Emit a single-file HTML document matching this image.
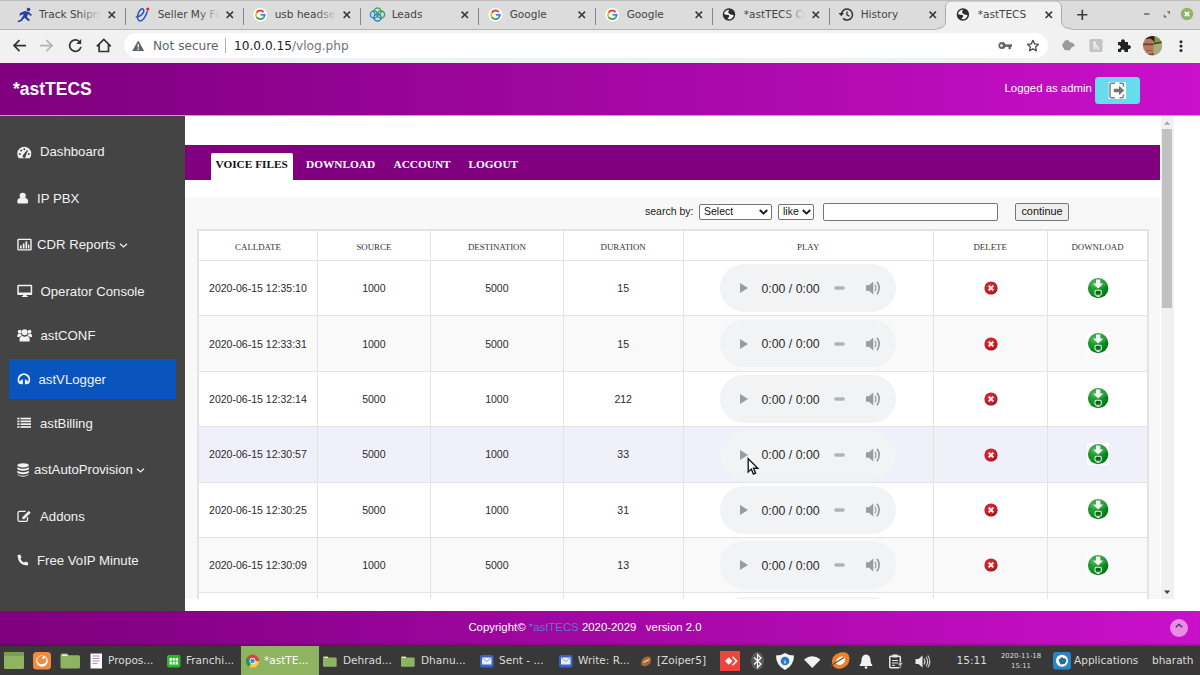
<!DOCTYPE html>
<html><head><meta charset="utf-8"><title>*astTECS</title>
<style>
*{box-sizing:border-box;margin:0;padding:0}
html,body{width:1200px;height:675px;overflow:hidden;background:#fff}
body{position:relative;font-family:"Liberation Sans",sans-serif}
.abs{position:absolute}
/* chrome */
#tabbar{position:absolute;left:0;top:0;width:1200px;height:30px;background:#dcdcdc;box-shadow:inset 0 -1px 0 #b4b4b4, inset 0 1px 0 #bcbcbc;overflow:hidden}
#tabbar .t{position:absolute;top:0;height:30px;overflow:hidden;font:10.540px "DejaVu Sans",sans-serif;color:#454545;line-height:29.400px;white-space:nowrap}
#tabbar .t.f::after{content:'';position:absolute;right:0;top:2px;width:22px;height:26px;background:linear-gradient(90deg,rgba(220,220,220,0),#dcdcdc)}
#tabbar .sep{position:absolute;top:7.500px;width:1px;height:17px;background:#80868b}
#tabbar .x{position:absolute;top:0;font:bold 12px "DejaVu Sans",sans-serif;line-height:29px;color:#3c4043}
#toolbar{position:absolute;left:0;top:30px;width:1200px;height:33px;background:#f1f1f1}
#omni{position:absolute;left:124px;top:3.200px;width:923.500px;height:25px;border-radius:12.500px;background:#fff}
#omni span{position:absolute;top:1.200px;line-height:25px;font:12.150px/25px "DejaVu Sans",sans-serif;white-space:nowrap}
/* header */
#hdr{position:absolute;left:0;top:63px;width:1200px;height:53px;background:linear-gradient(90deg,#800080 0%,#840084 10%,#ca10ca 100%);border-bottom:1px solid #d9a36a}
#side{position:absolute;left:0;top:116px;width:185px;height:496px;background:#444}
#side .it{position:absolute;color:#f2f2f2;font-size:13.2px;white-space:nowrap;line-height:16px}
#main{position:absolute;left:185px;top:116px;width:975px;height:483px;background:#fff;overflow:hidden}
#foot{position:absolute;left:0;top:611px;width:1200px;height:35px;box-shadow:inset 0 -3px 3px -2px rgba(60,0,60,.45);background:linear-gradient(90deg,#800080 0%,#840084 10%,#ca10ca 100%)}
#task{position:absolute;left:0;top:646px;width:1200px;height:29px;background:#383838;color:#dcdcdc;font:10.540px "DejaVu Sans",sans-serif;overflow:hidden}
#task .l{position:absolute;top:0;line-height:29px;white-space:nowrap}
table{border-collapse:collapse}

.nv{position:absolute;top:41px;font:bold 11.300px/14px "Liberation Serif",serif;color:#fff;white-space:nowrap}
.sel{position:absolute;top:88.200px;height:15.400px;border:1px solid #767676;border-radius:2px;background:#fff;font:10.500px/13.600px "Liberation Sans",sans-serif;color:#111;padding-left:4px}
.sel svg{position:absolute;top:4.200px}
.tb{position:absolute;table-layout:fixed;width:950px;background:#fff;border:2px solid #e3e3e3}
.tb th,.tb td{border:1px solid #e3e3e3;text-align:center;vertical-align:middle;padding:0}
.tb th{height:30.500px;font:normal 8.850px "Liberation Serif",serif;color:#333;padding-top:3px}
.tb td{height:55.400px;font:10.540px "Liberation Sans",sans-serif;color:#2b2b2b}
.tb tr.ev td{background:#f9f9f9}.tb tr.hv td{background:#f0f0fb}
.au{position:relative;width:176px;height:47.500px;border-radius:24px;background:#f1f3f4;margin:0 auto;left:.3px}
.au svg{position:absolute;left:0;top:0}
.au span{position:absolute;left:41px;top:16.600px;font:12.300px/16px "Liberation Sans",sans-serif;color:#2a2a2a;white-space:nowrap}
.tb td svg.ic{display:block;margin:0 auto}
</style></head><body>
<!-- TABBAR -->
<div id="tabbar">
 <!-- active tab shape -->
 <svg class="abs" style="left:937px;top:0" width="134" height="30" viewBox="0 0 134 30"><path d="M0 29 C5 29 8 26 8 21 V7.500 C8 3.500 11 .6 15 .6 H118 C122 .6 125 3.500 125 7.500 V21 C125 26 128 29 134 29 V30 H0 Z" fill="#f1f1f1"/><path d="M0 28.500 C5 28.500 8.500 26 8.500 21 V7.500 C8.500 3.500 11 1 15 1 H118 C122 1 124.500 3.500 124.500 7.500 V21 C124.500 26 128 28.500 134 28.500" fill="none" stroke="#a9a9a9" stroke-width="1"/></svg>
 <div class="t f" style="left:39px;width:62px">Track Shipment</div>
 <div class="t f" style="left:157.7px;width:62px">Seller My Forms</div>
 <div class="t f" style="left:274.7px;width:62px">usb headset</div>
 <div class="t" style="left:391.7px">Leads</div>
 <div class="t" style="left:509.7px">Google</div>
 <div class="t" style="left:626.7px">Google</div>
 <div class="t f" style="left:743.7px;width:62px">*astTECS Co</div>
 <div class="t" style="left:860.7px">History</div>
 <div class="t" style="left:977.7px">*astTECS</div>
 <div class="sep" style="left:125px"></div><div class="sep" style="left:243px"></div><div class="sep" style="left:360px"></div><div class="sep" style="left:478px"></div><div class="sep" style="left:595px"></div><div class="sep" style="left:712px"></div><div class="sep" style="left:829px"></div>
 <svg class="abs" style="left:0;top:.2px" width="1200" height="30" viewBox="0 0 1200 30">
  <g stroke="#3a3a3a" stroke-width="1.6" stroke-linecap="butt" fill="none">
   <path d="M108.6 11.6 l6.4 6.4 m0 -6.4 l-6.4 6.4"/><path d="M226.6 11.6 l6.4 6.4 m0 -6.4 l-6.4 6.4"/><path d="M343.6 11.6 l6.4 6.4 m0 -6.4 l-6.4 6.4"/><path d="M461.6 11.6 l6.4 6.4 m0 -6.4 l-6.4 6.4"/><path d="M578.6 11.6 l6.4 6.4 m0 -6.4 l-6.4 6.4"/><path d="M695.6 11.6 l6.4 6.4 m0 -6.4 l-6.4 6.4"/><path d="M812.6 11.6 l6.4 6.4 m0 -6.4 l-6.4 6.4"/><path d="M929.6 11.6 l6.4 6.4 m0 -6.4 l-6.4 6.4"/><path d="M1045.6 11.6 l6.4 6.4 m0 -6.4 l-6.4 6.4"/>
   <path d="M1082.300 9.700 v10.200 m-5.100 -5.100 h10.200" stroke="#3a3a3a" stroke-width="1.650"/>
   <path d="M1144 14 h5.600" stroke="#6a6a6a" stroke-width="1.500"/>
   <path d="M1166.700 11.300 h3.300 v3.300z M1163.800 14.200 v3.300 h3.300z" fill="#6a6a6a" stroke="none"/>
  </g>
  <circle cx="1187" cy="14" r="6.200" fill="#8fb36b"/><path d="M1184.800 11.800 l4.400 4.400 m0 -4.400 l-4.400 4.400" stroke="#fff" stroke-width="1.700"/>
  <!-- favicons -->
  <!-- runner -->
  <g fill="#2b3f9e"><circle cx="28.500" cy="9.500" r="1.800"/><path d="M20 13 l5 -2 l4 1 l3 3 l-1.200 1 l-2.800 -2 l-1 3 l3 3 l-1.500 1.200 l-4 -3.500 l-3 3.500 l-3.500 1 l-.5 -1.300 l3 -1.200 l3.500 -5.500 l-3 .8 l-1.500 1.500 z"/></g>
  <!-- e -->
  <path d="M136.300 17 C140.500 16.500 144.800 12.800 143.600 9.800 C142.400 7.300 138.800 10 137.700 15 C136.800 19.800 139 22 141.800 20.300 C144.300 18.700 146 15.500 147.300 11.500" fill="none" stroke="#2a58b8" stroke-width="1.500" stroke-linecap="round"/><circle cx="147.800" cy="9" r="1.600" fill="#e0202a"/>
  <!-- google G -->
  <g id="gg" transform="translate(260.300 14.800)"><circle cx="0" cy="0" r="7" fill="#fff"/><g fill="none" stroke-width="1.900"><path d="M-3.720 -2.150 A4.300 4.300 0 0 1 3.290 -2.760" stroke="#ea4335"/><path d="M-3.720 2.150 A4.300 4.300 0 0 1 -3.720 -2.150" stroke="#fbbc05"/><path d="M3.290 2.760 A4.300 4.300 0 0 1 -3.720 2.150" stroke="#34a853"/><path d="M4.300 0 A4.300 4.300 0 0 1 3.290 2.760" stroke="#4285f4"/></g><rect x=".2" y="-.95" width="5" height="1.900" fill="#4285f4"/></g>
  <g transform="translate(235.200 0)"><use href="#gg"/></g><g transform="translate(352 0)"><use href="#gg"/></g>
  <!-- leads -->
  <g fill="none" stroke-width="1.500"><circle cx="377.500" cy="11.500" r="3.600" stroke="#4caf50"/><circle cx="377.500" cy="17.500" r="3.600" stroke="#1e7fd6"/><circle cx="374" cy="14.500" r="3.600" stroke="#2a8fd8"/><circle cx="381" cy="14.500" r="3.600" stroke="#3aa060"/></g>
  <!-- globe -->
  <g id="gl" transform="translate(729 14.500)"><circle cx="0" cy="0" r="6.200" fill="#2d2d2d"/><path d="M-4.900 -.4 Q-4.600 -3 -3 -3.700 Q-1.500 -4.800 .2 -4.700 Q-1 -3.300 -.7 -1.900 Q0 -.5 1.200 -.2 Q3 .6 4.600 .4 Q4.600 2.200 3.500 3 Q2.500 4.600 1 4.700 Q-.8 4.900 -1.700 4.100 Q-.7 3.600 0 2.500 Q.8 1.500 -.3 .6 Q-1.500 0 -3 .2 Z" fill="#f6f6f6"/></g>
  <g transform="translate(233.900 0)"><use href="#gl"/></g>
  <!-- history -->
  <g fill="none" stroke="#333" stroke-width="1.500"><path d="M841.500 14.500 a5.500 5.500 0 1 1 1.600 3.900"/><path d="M847 11.500 v3.300 l2.500 1.500" stroke-width="1.300"/></g><path d="M838.500 13 h5.500 l-2.750 3.200 z" fill="#333"/>
 </svg>
</div>
<div id="toolbar">
 <div id="omni"><span style="left:29px;color:#5f6368">Not secure</span><span style="left:101px;top:5.300px;width:1px;height:14.500px;background:#b0b0b0"></span><span style="left:110px;color:#202124">10.0.0.15<span style="position:static;color:#70757a">/vlog.php</span></span></div>
 <svg class="abs" style="left:0;top:0" width="1200" height="33" viewBox="0 29.900 1200 33">
  <g fill="none" stroke="#333" stroke-width="1.700">
   <path d="M26 45.500 h-12 m5.500 -5.500 l-5.500 5.500 l5.500 5.500"/>
   <path d="M40 45.500 h12 m-5.500 -5.500 l5.500 5.500 l-5.500 5.500" stroke="#b4b4b4"/>
   <path d="M79.300 41.400 a5.700 5.700 0 1 0 1.600 5.400"/>
   <path d="M96.800 46.300 l7 -7 l7 7 m-11.700 -2.300 v7.400 h9.400 v-7.400" stroke-linejoin="miter"/>
  </g>
  <path d="M81.200 39 v5 h-5 z" fill="#333"/>
  <!-- warning -->
  <path d="M138.200 40.500 l6 10.500 h-12 z" fill="#5f6368"/><path d="M138.200 44 v3.500 m0 1 v1.400" stroke="#fff" stroke-width="1.300"/>
  <!-- key -->
  <g fill="#5f6368"><circle cx="1002" cy="45.500" r="3.500"/><rect x="1004" y="44.300" width="8" height="2.400"/><rect x="1008.500" y="45" width="2.300" height="4"/></g><circle cx="1001.500" cy="45.500" r="1.300" fill="#fff"/>
  <!-- star -->
  <path d="M1033 40.200 l1.650 3.600 l3.850 .45 l-2.900 2.600 l.8 3.850 l-3.400 -1.950 l-3.400 1.950 l.8 -3.850 l-2.900 -2.600 l3.850 -.45 z" fill="none" stroke="#444" stroke-width="1.250" stroke-linejoin="round"/>
  <!-- ext1 -->
  <path d="M1062 45 l3 -4.500 l3.500 -.5 l1 1.800 l3.500 1.200 l2 2.800 l-3 1.200 l-2.500 3.500 l-5 -.5 z" fill="#9a9a9a"/>
  <!-- ext2 -->
  <rect x="1089.500" y="39" width="13" height="13" rx="1.500" fill="#c4c4c4"/><path d="M1094.500 41.500 v8 m0 -3.500 q3 -2 3.500 3.500 M1093 43 h3" stroke="#f4f4f4" stroke-width="1.500" fill="none"/>
  <!-- puzzle -->
  <path d="M1118 42 h3.200 a2 2 0 1 1 3.600 0 h3.200 v3.200 a2 2 0 1 1 0 3.600 v3.200 h-3.600 a1.800 1.800 0 1 0 -3.200 0 h-3.200 v-3.400 a1.900 1.900 0 1 0 0 -3.400 z" fill="#222"/>
  <!-- avatar -->
  <clipPath id="avc"><circle cx="1152.500" cy="45.500" r="9.600"/></clipPath>
  <g clip-path="url(#avc)"><rect x="1142" y="35" width="22" height="22" fill="#b57c62"/><rect x="1153.600" y="35" width="10" height="22" fill="#aaab7c"/><path d="M1153.600 35 h10 v7 l-10 1.500z" fill="#7f9a4e"/><path d="M1153.600 43 l10 -2 v1.500 l-10 2z" fill="#4a3820"/><path d="M1142 35 h12.500 v8 q-1.500 -4 -5 -4.500 q-4 0 -7.500 3z" fill="#2a1c14"/><rect x="1143" y="43.300" width="10.500" height="1.800" fill="#3a2418" opacity=".6"/><path d="M1145 53 q4 2 8.600 0 v4 h-8.600z" fill="#5a3426" opacity=".8"/><rect x="1146.500" y="49.800" width="5" height="1" fill="#7a4838" opacity=".7"/></g>
  <!-- menu -->
  <g fill="#2e2e2e"><circle cx="1181" cy="41.600" r="1.550"/><circle cx="1181" cy="46" r="1.550"/><circle cx="1181" cy="50.400" r="1.550"/></g>
 </svg>
</div>
<div id="hdr">
 <div class="abs" style="left:13px;top:15px;font:bold 17.500px/22px 'Liberation Sans',sans-serif;color:#fff">*astTECS</div>
 <div class="abs" style="left:1004.500px;top:18.300px;font:11.400px/14px 'Liberation Sans',sans-serif;color:#fff;white-space:nowrap">Logged as admin</div>
 <div class="abs" style="left:1095px;top:13.700px;width:45px;height:27.600px;border-radius:3.500px;background:#67dced"></div>
 <svg class="abs" style="left:1107px;top:18px" width="22" height="20" viewBox="0 0 22 20"><rect x="1.700" y="1" width="17.300" height="17" fill="#fff"/><path d="M8 2.200 h-3.500 q-1.500 0 -1.500 1.500 v11.600 q0 1.500 1.500 1.500 h3.500 M12.500 2.200 h2.500 q1.500 0 1.500 1.500 v2 M12.500 16.800 h2.500 q1.500 0 1.500 -1.500 v-2" fill="none" stroke="#808080" stroke-width="1.500"/><path d="M6.800 7.700 h5.200 v-3 l5.300 4.800 l-5.300 4.800 v-3 h-5.200z" fill="#757575"/></svg>
</div>
<div id="side">
 <div class="act abs" style="left:9px;top:243.300px;width:166.500px;height:39.300px;background:#0a54be"></div>
 <div class="it" style="left:40px;top:28.4px">Dashboard</div>
 <div class="it" style="left:37px;top:74.9px">IP PBX</div>
 <div class="it" style="left:37px;top:121.4px">CDR Reports</div>
 <div class="it" style="left:40.500px;top:167.9px">Operator Console</div>
 <div class="it" style="left:40.500px;top:211.9px">astCONF</div>
 <div class="it" style="left:38.500px;top:255.9px">astVLogger</div>
 <div class="it" style="left:40px;top:299.9px">astBilling</div>
 <div class="it" style="left:34px;top:346.4px">astAutoProvision</div>
 <div class="it" style="left:40px;top:392.9px">Addons</div>
 <div class="it" style="left:37px;top:436.9px">Free VoIP Minute</div>
 <svg class="abs" style="left:0;top:0" width="185" height="494" viewBox="0 116 185 494">
  <g fill="#f2f2f2" stroke="none">
   <!-- dashboard gauge -->
   <path d="M18.700 157.900 a7 7 0 1 1 11.200 0 q-.3 .3 -.7 .3 h-9.800 q-.4 0 -.7 -.3z"/>
   <g fill="#444"><circle cx="19.800" cy="154" r="1"/><circle cx="21.200" cy="150.600" r="1"/><circle cx="24.300" cy="149.200" r="1"/><circle cx="28.800" cy="154" r="1"/><path d="M22.900 155.300 a1.600 1.600 0 1 0 2.800 .6 l2.300 -5.400 l-1 -.4 z"/></g>
   <!-- user -->
   <circle cx="22.700" cy="195.800" r="3.100"/><path d="M17.300 202.300 v-1 q0 -3 3.200 -3.300 q2.200 1.500 4.400 0 q3.200 .3 3.200 3.300 v1 q0 1.100 -1.100 1.100 h-8.600 q-1.100 0 -1.100 -1.100z"/>
   <!-- bar chart -->
   <path d="M18.600 238.800 h11.800 q1.300 0 1.300 1.300 v9.100 q0 1.300 -1.300 1.300 h-11.800 q-1.300 0 -1.300 -1.300 v-9.100 q0 -1.300 1.300 -1.300z M18.700 240.100 v9.100 h11.600 v-9.100z" fill-rule="evenodd"/>
   <rect x="20" y="245.500" width="1.700" height="3"/><rect x="22.800" y="243.500" width="1.700" height="5"/><rect x="25.500" y="241.300" width="1.700" height="7.200"/><rect x="28" y="244.500" width="1.300" height="4"/>
   <!-- monitor -->
   <path d="M18.300 284.700 h12.900 q1 0 1 1 v8.300 q0 1 -1 1 h-12.900 q-1 0 -1 -1 v-8.300 q0 -1 1 -1z M18.800 286.200 v6.300 h11.900 v-6.300z" fill-rule="evenodd"/><path d="M23.300 295 h3 l.4 1.100 h1 v.8 h-5.800 v-.8 h1z"/>
   <!-- users -->
   <circle cx="24.600" cy="332.200" r="3"/><path d="M19.600 341.500 v-2.700 q0 -2.700 2.700 -2.900 q2.300 1.500 4.600 0 q2.700 .2 2.700 2.900 v2.700z"/>
   <circle cx="19.700" cy="331.700" r="1.900"/><circle cx="29.500" cy="331.700" r="1.900"/><path d="M17.300 337 v-1.500 q0 -1.700 1.600 -1.700 h1.800 q.6 1.300 1.500 1.800 q-2.300 .2 -2.800 1.400z M32 337 v-1.500 q0 -1.700 -1.600 -1.700 h-1.800 q-.6 1.300 -1.500 1.800 q2.300 .2 2.800 1.400z"/>
   <!-- headphones -->
   <path d="M19.900 383.300 a5.400 5.400 0 1 1 8 0" fill="none" stroke="#f2f2f2" stroke-width="1.900"/><path d="M19.300 383.300 l1.300 -3 l2.300 -1 v4.900 h-1.800z M28.500 383.300 l-1.300 -3 l-2.300 -1 v4.900 h1.800z"/>
   <!-- list -->
   <g><rect x="17.300" y="417.700" width="2.200" height="1.700"/><rect x="20.500" y="417.700" width="10.500" height="1.700"/><rect x="17.300" y="420.500" width="2.200" height="1.700"/><rect x="20.500" y="420.500" width="10.500" height="1.700"/><rect x="17.300" y="423.300" width="2.200" height="1.700"/><rect x="20.500" y="423.300" width="10.500" height="1.700"/><rect x="17.300" y="426.100" width="2.200" height="1.700"/><rect x="20.500" y="426.100" width="10.500" height="1.700"/></g>
   <!-- database -->
   <ellipse cx="23.100" cy="465.300" rx="5.800" ry="2.100"/>
   <path d="M17.300 467.200 q5.800 3 11.600 0 v2 q-5.800 3.300 -11.600 0z M17.300 470.700 q5.800 3 11.600 0 v2 q-5.800 3.300 -11.600 0z M17.300 474.200 q5.800 3 11.600 0 v.6 q-5.800 3.800 -11.600 0z"/>
   <!-- phone -->
   <path d="M18 555 l2.300 -.5 l1.300 3 l-1.300 1.200 q1.200 2.700 3.800 4 l1.200 -1.300 l3 1.300 l-.5 2.300 q-.1 .5 -.7 .5 q-8.800 -.5 -9.600 -9.800 q0 -.5 .5 -.7z"/>
  </g>
  <!-- edit -->
  <g fill="none" stroke="#f2f2f2" stroke-width="1.300"><path d="M27.500 517 v2.800 q0 1.600 -1.600 1.600 h-6.300 q-1.600 0 -1.600 -1.600 v-6.800 q0 -1.600 1.600 -1.600 h6"/></g>
  <path d="M22 519.500 v-2.200 l6.800 -6.800 l2.200 2.200 l-6.800 6.800z" fill="#f2f2f2" stroke="#444" stroke-width=".7"/>
  <!-- chevrons -->
  <g fill="none" stroke="#f2f2f2" stroke-width="1.200"><path d="M120 243.700 l3.500 3.300 l3.500 -3.300"/><path d="M137 468.700 l3.500 3.300 l3.500 -3.300"/></g>
 </svg>
</div>
<!--MAIN-->
<div id="main">
<svg width="0" height="0" style="position:absolute"><defs><radialGradient id="rg" cx=".45" cy=".4" r=".6"><stop offset="0" stop-color="#e8303a"/><stop offset=".7" stop-color="#c81e28"/><stop offset="1" stop-color="#96141c"/></radialGradient><radialGradient id="gg2" cx=".35" cy=".35" r=".75"><stop offset="0" stop-color="#2fae3c"/><stop offset=".6" stop-color="#0f9022"/><stop offset="1" stop-color="#04681a"/></radialGradient></defs></svg>
<div class="abs" style="left:0;top:28.600px;width:975px;height:35.600px;background:#800080"></div>
<div class="abs" style="left:25.500px;top:36.500px;width:82px;height:28px;background:#fff;border-radius:2px 2px 0 0"></div>
<div class="nv" style="left:30.500px;color:#111">VOICE FILES</div><div class="nv" style="left:121px">DOWNLOAD</div><div class="nv" style="left:208.500px">ACCOUNT</div><div class="nv" style="left:283.500px">LOGOUT</div>
<div class="abs" style="left:0;top:81px;width:975px;height:403px;background:#f8f8f8"></div>
<div class="abs" style="left:460px;top:88.200px;font:10.500px/14px 'Liberation Sans',sans-serif;color:#222;white-space:nowrap">search by:</div>
<div class="sel" style="left:514px;width:73px">Select<svg width="9" height="6" viewBox="0 0 9 6" style="right:3.500px"><path d="M.8 1 l3.700 3.600 l3.700 -3.600" fill="none" stroke="#111" stroke-width="1.800"/></svg></div>
<div class="sel" style="left:593px;width:36.300px">like<svg width="9" height="6" viewBox="0 0 9 6" style="right:2.500px"><path d="M.8 1 l3.700 3.600 l3.700 -3.600" fill="none" stroke="#111" stroke-width="1.800"/></svg></div>
<div class="abs" style="left:638px;top:87px;width:175px;height:17.500px;border:1px solid #767676;border-radius:2px;background:#fff"></div>
<div class="abs" style="left:830px;top:87px;width:54px;height:17.500px;border:1px solid #767676;border-radius:2px;background:#efefef;font:10.900px/15px 'Liberation Sans',sans-serif;color:#111;text-align:center">continue</div>
<table class="tb" style="left:12.200px;top:113px"><colgroup><col style="width:119px"><col style="width:113.400px"><col style="width:132.600px"><col style="width:120px"><col style="width:250px"><col style="width:114px"><col style="width:101.200px"></colgroup>
<tr class="h"><th>CALLDATE</th><th>SOURCE</th><th>DESTINATION</th><th>DURATION</th><th>PLAY</th><th>DELETE</th><th>DOWNLOAD</th></tr>
<tr class="od"><td>2020-06-15 12:35:10</td><td>1000</td><td>5000</td><td>15</td><td><div class="au"><svg width="176" height="48" viewBox="0 0 176 48"><path d="M20 19 l8 5 l-8 5z" fill="#9b9b9b"/><path d="M116 24 h7" stroke="#b3b3b3" stroke-width="3.600" stroke-linecap="round"/><path d="M146 21.300 h3 l4.300 -3.800 v13 l-4.300 -3.800 h-3z" fill="#9b9b9b"/><path d="M155 20.800 q2 3.200 0 6.400" fill="none" stroke="#9b9b9b" stroke-width="1.200"/><path d="M157 17.800 q4.300 6.200 0 12.400" fill="none" stroke="#9b9b9b" stroke-width="1.700"/></svg><span>0:00 / 0:00</span></div></td><td><svg class="ic" width="16" height="16" viewBox="0 0 16 16" style="position:relative;left:.6px;top:.3px"><circle cx="8" cy="8" r="6.600" fill="url(#rg)"/><path d="M5.700 5.700 l4.600 4.600 m0 -4.600 l-4.600 4.600" stroke="#fff" stroke-width="1.900" stroke-linecap="butt"/></svg></td><td><svg class="ic" width="22.300" height="22.300" viewBox="0 0 22.300 22.300" style="background:#fff;position:relative;top:-.5px;left:.5px"><circle cx="11.150" cy="11.150" r="10.200" fill="url(#gg2)"/><path d="M1.500 8 a10.200 10.200 0 0 1 19.300 0 q-9.600 6 -19.300 0z" fill="#fff" opacity=".13"/><path d="M9 2.400 h4.300 v4 h3 l-5.150 5.200 l-5.150 -5.200 h3z" fill="#f4f4f4"/><rect x="8" y="13.200" width="6.300" height="5" rx="1.400" fill="#0a6a18" stroke="#e4f0e4" stroke-width="1.100"/><path d="M8.800 18.900 h4.700 l-2.350 1.300z" fill="#e4f0e4"/></svg></td></tr>
<tr class="ev"><td>2020-06-15 12:33:31</td><td>1000</td><td>5000</td><td>15</td><td><div class="au"><svg width="176" height="48" viewBox="0 0 176 48"><path d="M20 19 l8 5 l-8 5z" fill="#9b9b9b"/><path d="M116 24 h7" stroke="#b3b3b3" stroke-width="3.600" stroke-linecap="round"/><path d="M146 21.300 h3 l4.300 -3.800 v13 l-4.300 -3.800 h-3z" fill="#9b9b9b"/><path d="M155 20.800 q2 3.200 0 6.400" fill="none" stroke="#9b9b9b" stroke-width="1.200"/><path d="M157 17.800 q4.300 6.200 0 12.400" fill="none" stroke="#9b9b9b" stroke-width="1.700"/></svg><span>0:00 / 0:00</span></div></td><td><svg class="ic" width="16" height="16" viewBox="0 0 16 16" style="position:relative;left:.6px;top:.3px"><circle cx="8" cy="8" r="6.600" fill="url(#rg)"/><path d="M5.700 5.700 l4.600 4.600 m0 -4.600 l-4.600 4.600" stroke="#fff" stroke-width="1.900" stroke-linecap="butt"/></svg></td><td><svg class="ic" width="22.300" height="22.300" viewBox="0 0 22.300 22.300" style="background:#fff;position:relative;top:-.5px;left:.5px"><circle cx="11.150" cy="11.150" r="10.200" fill="url(#gg2)"/><path d="M1.500 8 a10.200 10.200 0 0 1 19.300 0 q-9.600 6 -19.300 0z" fill="#fff" opacity=".13"/><path d="M9 2.400 h4.300 v4 h3 l-5.150 5.200 l-5.150 -5.200 h3z" fill="#f4f4f4"/><rect x="8" y="13.200" width="6.300" height="5" rx="1.400" fill="#0a6a18" stroke="#e4f0e4" stroke-width="1.100"/><path d="M8.800 18.900 h4.700 l-2.350 1.300z" fill="#e4f0e4"/></svg></td></tr>
<tr class="od"><td>2020-06-15 12:32:14</td><td>5000</td><td>1000</td><td>212</td><td><div class="au"><svg width="176" height="48" viewBox="0 0 176 48"><path d="M20 19 l8 5 l-8 5z" fill="#9b9b9b"/><path d="M116 24 h7" stroke="#b3b3b3" stroke-width="3.600" stroke-linecap="round"/><path d="M146 21.300 h3 l4.300 -3.800 v13 l-4.300 -3.800 h-3z" fill="#9b9b9b"/><path d="M155 20.800 q2 3.200 0 6.400" fill="none" stroke="#9b9b9b" stroke-width="1.200"/><path d="M157 17.800 q4.300 6.200 0 12.400" fill="none" stroke="#9b9b9b" stroke-width="1.700"/></svg><span>0:00 / 0:00</span></div></td><td><svg class="ic" width="16" height="16" viewBox="0 0 16 16" style="position:relative;left:.6px;top:.3px"><circle cx="8" cy="8" r="6.600" fill="url(#rg)"/><path d="M5.700 5.700 l4.600 4.600 m0 -4.600 l-4.600 4.600" stroke="#fff" stroke-width="1.900" stroke-linecap="butt"/></svg></td><td><svg class="ic" width="22.300" height="22.300" viewBox="0 0 22.300 22.300" style="background:#fff;position:relative;top:-.5px;left:.5px"><circle cx="11.150" cy="11.150" r="10.200" fill="url(#gg2)"/><path d="M1.500 8 a10.200 10.200 0 0 1 19.300 0 q-9.600 6 -19.300 0z" fill="#fff" opacity=".13"/><path d="M9 2.400 h4.300 v4 h3 l-5.150 5.200 l-5.150 -5.200 h3z" fill="#f4f4f4"/><rect x="8" y="13.200" width="6.300" height="5" rx="1.400" fill="#0a6a18" stroke="#e4f0e4" stroke-width="1.100"/><path d="M8.800 18.900 h4.700 l-2.350 1.300z" fill="#e4f0e4"/></svg></td></tr>
<tr class="hv"><td>2020-06-15 12:30:57</td><td>5000</td><td>1000</td><td>33</td><td><div class="au"><svg width="176" height="48" viewBox="0 0 176 48"><path d="M20 19 l8 5 l-8 5z" fill="#9b9b9b"/><path d="M116 24 h7" stroke="#b3b3b3" stroke-width="3.600" stroke-linecap="round"/><path d="M146 21.300 h3 l4.300 -3.800 v13 l-4.300 -3.800 h-3z" fill="#9b9b9b"/><path d="M155 20.800 q2 3.200 0 6.400" fill="none" stroke="#9b9b9b" stroke-width="1.200"/><path d="M157 17.800 q4.300 6.200 0 12.400" fill="none" stroke="#9b9b9b" stroke-width="1.700"/></svg><span>0:00 / 0:00</span></div></td><td><svg class="ic" width="16" height="16" viewBox="0 0 16 16" style="position:relative;left:.6px;top:.3px"><circle cx="8" cy="8" r="6.600" fill="url(#rg)"/><path d="M5.700 5.700 l4.600 4.600 m0 -4.600 l-4.600 4.600" stroke="#fff" stroke-width="1.900" stroke-linecap="butt"/></svg></td><td><svg class="ic" width="22.300" height="22.300" viewBox="0 0 22.300 22.300" style="background:#fff;position:relative;top:-.5px;left:.5px"><circle cx="11.150" cy="11.150" r="10.200" fill="url(#gg2)"/><path d="M1.500 8 a10.200 10.200 0 0 1 19.300 0 q-9.600 6 -19.300 0z" fill="#fff" opacity=".13"/><path d="M9 2.400 h4.300 v4 h3 l-5.150 5.200 l-5.150 -5.200 h3z" fill="#f4f4f4"/><rect x="8" y="13.200" width="6.300" height="5" rx="1.400" fill="#0a6a18" stroke="#e4f0e4" stroke-width="1.100"/><path d="M8.800 18.900 h4.700 l-2.350 1.300z" fill="#e4f0e4"/></svg></td></tr>
<tr class="od"><td>2020-06-15 12:30:25</td><td>5000</td><td>1000</td><td>31</td><td><div class="au"><svg width="176" height="48" viewBox="0 0 176 48"><path d="M20 19 l8 5 l-8 5z" fill="#9b9b9b"/><path d="M116 24 h7" stroke="#b3b3b3" stroke-width="3.600" stroke-linecap="round"/><path d="M146 21.300 h3 l4.300 -3.800 v13 l-4.300 -3.800 h-3z" fill="#9b9b9b"/><path d="M155 20.800 q2 3.200 0 6.400" fill="none" stroke="#9b9b9b" stroke-width="1.200"/><path d="M157 17.800 q4.300 6.200 0 12.400" fill="none" stroke="#9b9b9b" stroke-width="1.700"/></svg><span>0:00 / 0:00</span></div></td><td><svg class="ic" width="16" height="16" viewBox="0 0 16 16" style="position:relative;left:.6px;top:.3px"><circle cx="8" cy="8" r="6.600" fill="url(#rg)"/><path d="M5.700 5.700 l4.600 4.600 m0 -4.600 l-4.600 4.600" stroke="#fff" stroke-width="1.900" stroke-linecap="butt"/></svg></td><td><svg class="ic" width="22.300" height="22.300" viewBox="0 0 22.300 22.300" style="background:#fff;position:relative;top:-.5px;left:.5px"><circle cx="11.150" cy="11.150" r="10.200" fill="url(#gg2)"/><path d="M1.500 8 a10.200 10.200 0 0 1 19.300 0 q-9.600 6 -19.300 0z" fill="#fff" opacity=".13"/><path d="M9 2.400 h4.300 v4 h3 l-5.150 5.200 l-5.150 -5.200 h3z" fill="#f4f4f4"/><rect x="8" y="13.200" width="6.300" height="5" rx="1.400" fill="#0a6a18" stroke="#e4f0e4" stroke-width="1.100"/><path d="M8.800 18.900 h4.700 l-2.350 1.300z" fill="#e4f0e4"/></svg></td></tr>
<tr class="ev"><td>2020-06-15 12:30:09</td><td>1000</td><td>5000</td><td>13</td><td><div class="au"><svg width="176" height="48" viewBox="0 0 176 48"><path d="M20 19 l8 5 l-8 5z" fill="#9b9b9b"/><path d="M116 24 h7" stroke="#b3b3b3" stroke-width="3.600" stroke-linecap="round"/><path d="M146 21.300 h3 l4.300 -3.800 v13 l-4.300 -3.800 h-3z" fill="#9b9b9b"/><path d="M155 20.800 q2 3.200 0 6.400" fill="none" stroke="#9b9b9b" stroke-width="1.200"/><path d="M157 17.800 q4.300 6.200 0 12.400" fill="none" stroke="#9b9b9b" stroke-width="1.700"/></svg><span>0:00 / 0:00</span></div></td><td><svg class="ic" width="16" height="16" viewBox="0 0 16 16" style="position:relative;left:.6px;top:.3px"><circle cx="8" cy="8" r="6.600" fill="url(#rg)"/><path d="M5.700 5.700 l4.600 4.600 m0 -4.600 l-4.600 4.600" stroke="#fff" stroke-width="1.900" stroke-linecap="butt"/></svg></td><td><svg class="ic" width="22.300" height="22.300" viewBox="0 0 22.300 22.300" style="background:#fff;position:relative;top:-.5px;left:.5px"><circle cx="11.150" cy="11.150" r="10.200" fill="url(#gg2)"/><path d="M1.500 8 a10.200 10.200 0 0 1 19.300 0 q-9.600 6 -19.300 0z" fill="#fff" opacity=".13"/><path d="M9 2.400 h4.300 v4 h3 l-5.150 5.200 l-5.150 -5.200 h3z" fill="#f4f4f4"/><rect x="8" y="13.200" width="6.300" height="5" rx="1.400" fill="#0a6a18" stroke="#e4f0e4" stroke-width="1.100"/><path d="M8.800 18.900 h4.700 l-2.350 1.300z" fill="#e4f0e4"/></svg></td></tr>
<tr class="od"><td>2020-06-15 12:29:41</td><td>1000</td><td>5000</td><td>27</td><td><div class="au"><svg width="176" height="48" viewBox="0 0 176 48"><path d="M20 19 l8 5 l-8 5z" fill="#9b9b9b"/><path d="M116 24 h7" stroke="#b3b3b3" stroke-width="3.600" stroke-linecap="round"/><path d="M146 21.300 h3 l4.300 -3.800 v13 l-4.300 -3.800 h-3z" fill="#9b9b9b"/><path d="M155 20.800 q2 3.200 0 6.400" fill="none" stroke="#9b9b9b" stroke-width="1.200"/><path d="M157 17.800 q4.300 6.200 0 12.400" fill="none" stroke="#9b9b9b" stroke-width="1.700"/></svg><span>0:00 / 0:00</span></div></td><td><svg class="ic" width="16" height="16" viewBox="0 0 16 16" style="position:relative;left:.6px;top:.3px"><circle cx="8" cy="8" r="6.600" fill="url(#rg)"/><path d="M5.700 5.700 l4.600 4.600 m0 -4.600 l-4.600 4.600" stroke="#fff" stroke-width="1.900" stroke-linecap="butt"/></svg></td><td><svg class="ic" width="22.300" height="22.300" viewBox="0 0 22.300 22.300" style="background:#fff;position:relative;top:-.5px;left:.5px"><circle cx="11.150" cy="11.150" r="10.200" fill="url(#gg2)"/><path d="M1.500 8 a10.200 10.200 0 0 1 19.300 0 q-9.600 6 -19.300 0z" fill="#fff" opacity=".13"/><path d="M9 2.400 h4.300 v4 h3 l-5.150 5.200 l-5.150 -5.200 h3z" fill="#f4f4f4"/><rect x="8" y="13.200" width="6.300" height="5" rx="1.400" fill="#0a6a18" stroke="#e4f0e4" stroke-width="1.100"/><path d="M8.800 18.900 h4.700 l-2.350 1.300z" fill="#e4f0e4"/></svg></td></tr>
</table>
</div>
<div class="abs" style="left:1160.700px;top:116px;width:13.200px;height:483px;background:#f1f1f1"></div>
<div class="abs" style="left:1162.200px;top:129px;width:9.800px;height:178.500px;background:#c1c1c1"></div>
<svg class="abs" style="left:1160px;top:116px" width="15" height="484" viewBox="0 0 15 484"><path d="M4 8.800 l3.100 -3.500 l3.100 3.500z" fill="#a3a3a3"/><path d="M4 474.500 l3.100 3.500 l3.100 -3.500z" fill="#404040"/></svg>
<svg class="abs" style="left:745px;top:456px" width="18" height="22" viewBox="0 0 18 22"><path d="M3.200 2.800 v13.200 l3.100 -2.900 l2.100 4.900 l2.200 -.9 l-2.100 -4.800 h4.300z" fill="#fff" stroke="#1c1c1c" stroke-width="1.400" stroke-linejoin="miter"/></svg>
<!--/MAIN-->
<div id="foot">
 <div class="abs" style="left:468.400px;top:8.700px;font:11.400px/14px 'Liberation Sans',sans-serif;color:#fff;white-space:pre">Copyright© <span style="color:#5a7acc">*astTECS</span> 2020-2029   version 2.0</div>
 <div class="abs" style="left:1170px;top:8.300px;width:17.800px;height:17.800px;border-radius:9px;background:#e88ee6"></div>
 <svg class="abs" style="left:1170px;top:8.300px" width="18" height="18" viewBox="0 0 18 18"><path d="M5.800 8.300 l3.200 -3 l3.200 3" fill="none" stroke="#33305a" stroke-width="1.200"/></svg>
</div>
<div id="task">
 <div class="abs" style="left:240.500px;top:0;width:78px;height:29px;background:#8fb461"></div>
 <div class="l" style="left:108px">Propos...</div>
 <div class="l" style="left:186px">Franchi...</div>
 <div class="l" style="left:264px;color:#fff">*astTE...</div>
 <div class="l" style="left:343px">Dehrad...</div>
 <div class="l" style="left:421px">Dhanu...</div>
 <div class="l" style="left:499px">Sent - ...</div>
 <div class="l" style="left:578px">Write: R...</div>
 <div class="l" style="left:657px">[Zoiper5]</div>
 <div class="l" style="left:956.500px">15:11</div>
 <div class="l" style="left:1000px;width:42px;text-align:center;font-size:6.900px;line-height:10px;top:4.500px">2020-11-18<br>15:11</div>
 <div class="l" style="left:1074px">Applications</div>
 <div class="l" style="left:1152px">bharath</div>
 <svg class="abs" style="left:0;top:0" width="1200" height="29" viewBox="0 646 1200 29">
  <!-- show desktop -->
  <rect x="4" y="652" width="20" height="17" rx="1.500" fill="#8fb461"/><rect x="4" y="652" width="20" height="4" rx="1.500" fill="#7a9f4f"/>
  <!-- firefox-ish -->
  <rect x="33" y="652" width="18" height="17.500" rx="3.500" fill="#f08a3c"/><circle cx="42" cy="661" r="5.800" fill="#fff"/><path d="M38 658 q2 -3 6 -2.500 q-2.500 1.500 -1.500 3.500 q3 0 3.500 -2 q1.500 4 -1.500 6.500 q-4 2 -7 -1.500 q-.8 -2 0.500 -4z" fill="#f08a3c"/>
  <!-- folder -->
  <g id="fd"><path d="M60.500 655 q0 -1.500 1.500 -1.500 h5 l1.500 1.800 h10 q1.500 0 1.500 1.500 v10.200 q0 1.500 -1.500 1.500 h-16.500 q-1.500 0 -1.500 -1.500z" fill="#8fb461"/><path d="M62 654.500 h5 l1.200 1.500 h-6.200z" fill="#e8f0dc"/></g>
  <g transform="translate(323 656) scale(.7)"><path d="M0 2 q0 -1.500 1.500 -1.500 h5 l1.500 1.800 h10 q1.500 0 1.500 1.500 v10.200 q0 1.500 -1.500 1.500 h-16.500 q-1.500 0 -1.500 -1.500z" fill="#8fb461"/><path d="M1.500 1.500 h5 l1.200 1.500 h-6.200z" fill="#e8f0dc"/></g>
  <g transform="translate(401 656) scale(.7)"><path d="M0 2 q0 -1.500 1.500 -1.500 h5 l1.500 1.800 h10 q1.500 0 1.500 1.500 v10.200 q0 1.500 -1.500 1.500 h-16.500 q-1.500 0 -1.500 -1.500z" fill="#8fb461"/><path d="M1.500 1.500 h5 l1.200 1.500 h-6.200z" fill="#e8f0dc"/></g>
  <!-- doc -->
  <rect x="90.500" y="653.500" width="11.500" height="15" fill="#fafafa"/><path d="M92.500 656 h7 M92.500 658.500 h7 M92.500 661 h7 M92.500 663.500 h5" stroke="#9a7ab0" stroke-width=".8"/>
  <!-- sheet -->
  <rect x="167" y="655" width="13.500" height="12.500" rx="2" fill="#2fb52f"/><rect x="169.500" y="658" width="8.500" height="6.500" fill="#fff"/><path d="M169.500 661.200 h8.500 M172.300 658 v6.500 M175.200 658 v6.500" stroke="#2fb52f" stroke-width=".9"/>
  <!-- chrome -->
  <circle cx="252.500" cy="661" r="6.500" fill="#db4437"/><path d="M252.500 661 l-5.600 -3.300 a6.500 6.500 0 0 0 2.400 9 z" fill="#0f9d58"/><path d="M252.500 661 l-3.200 5.700 a6.500 6.500 0 0 0 9.700 -5.700z" fill="#ffcd40"/><path d="M252.500 661 h6.500 a6.500 6.500 0 0 0 -.9 -3.300 h-5.600z" fill="#db4437"/><circle cx="252.500" cy="661" r="3" fill="#fff"/><circle cx="252.500" cy="661" r="2.300" fill="#4285f4"/>
  <!-- mail -->
  <g id="ml"><rect x="480" y="655" width="13.500" height="12.500" rx="2" fill="#3a62c8"/><rect x="482" y="657.500" width="9.500" height="7" fill="#e8ecf4"/><path d="M482 657.500 l4.750 4 l4.750 -4" fill="none" stroke="#8a94b0" stroke-width=".9"/></g>
  <use href="#ml" x="79"/>
  <!-- zoiper small -->
  <path d="M641 664 q0 -6 6 -7.500 q4 -.5 4 3 q0 5 -5 6.500 q-4 1 -5 -2z" fill="#b06a30"/><path d="M643.500 662.500 l5.500 -3" stroke="#ddd" stroke-width="1.300"/>
  <!-- anydesk -->
  <rect x="720" y="651" width="20" height="20" fill="#ef443b"/><path d="M725 661 l3.800 -3.800 l3.800 3.800 l-3.800 3.800z" fill="#fff"/><path d="M732.500 656.800 l4.200 4.200 l-4.200 4.200" fill="none" stroke="#fff" stroke-width="1.500"/>
  <!-- bluetooth -->
  <ellipse cx="757.500" cy="661" rx="6.500" ry="9" fill="#5a5a5a"/><path d="M754 657.500 l7 6.500 l-3.500 3.500 v-13 l3.500 3.500 l-7 6.500" fill="none" stroke="#fff" stroke-width="1.200"/>
  <!-- shield -->
  <path d="M785 653 q4 2.500 9 2.500 q0 10 -9 14.500 q-9 -4.500 -9 -14.500 q5 0 9 -2.500z" fill="#f4f4f4"/><circle cx="785" cy="661" r="4.300" fill="#2a78c8"/><path d="M785 659 v.1 M785 660.500 v3" stroke="#fff" stroke-width="1.200"/>
  <!-- wifi -->
  <path d="M804 659.500 q8 -6.500 16.500 0 l-8.250 8.500z" fill="#f2f2f2"/>
  <!-- zoiper big -->
  <path d="M832 664 q-1 -9 8 -11.500 q9 -1.500 9.500 5.500 q0 8 -8 10.500 q-7 1.500 -9.500 -4.500z" fill="#f08028"/><path d="M836 663 q0 -5 5 -6.500 q4 -.5 4 3 q0 4 -4.500 5.500 q-3.500 .5 -4.500 -2z" fill="#fff"/><path d="M831 665.500 l13 -8" stroke="#555" stroke-width="1.400"/>
  <!-- bell -->
  <path d="M866 654.500 q4.500 .5 4.500 6 q0 3.500 1.800 4.500 v1 h-12.600 v-1 q1.800 -1 1.800 -4.500 q0 -5.500 4.500 -6z" fill="#f2f2f2"/><circle cx="866" cy="667.500" r="1.300" fill="#f2f2f2"/>
  <!-- clipboard -->
  <rect x="889.800" y="656.300" width="10.500" height="11.500" rx="1" fill="none" stroke="#e8e8e8" stroke-width="1.500"/><rect x="892.500" y="654.500" width="5" height="3" fill="#e8e8e8"/><path d="M892 660.500 h6 M892 663 h6 M892 665.300 h3" stroke="#e8e8e8" stroke-width="1"/><path d="M899 662.500 h4 l-3.500 6 v-3.500 h-2z" fill="#bdbdbd" stroke="#3a3a3a" stroke-width=".5"/>
  <!-- volume -->
  <path d="M915.500 659 h3 l4 -3.500 v12 l-4 -3.500 h-3z" fill="#e8e8e8"/><path d="M924 658.500 q2 3 0 6 M926 656.800 q3.300 4.700 0 9.400 M927.800 655.500 q4 6 0 12" fill="none" stroke="#cfcfcf" stroke-width="1.100"/>
  <!-- xfce menu -->
  <rect x="1053" y="652" width="18" height="17.500" rx="3" fill="#2a86c2"/><circle cx="1062" cy="660.800" r="6" fill="#fff"/><path d="M1058.500 660 l3 -3 l1.500 1 l2.500 .5 l1 2.500 l-2 3 l-4 .5 z" fill="#2a6a9a"/>
 </svg>
</div>
</body></html>
